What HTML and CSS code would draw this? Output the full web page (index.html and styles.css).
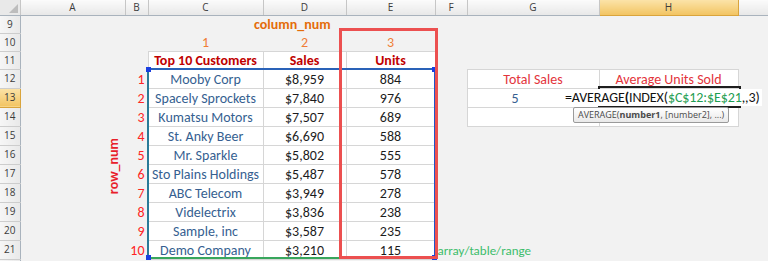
FILE: index.html
```html
<!DOCTYPE html>
<html lang="en">
<head>
    <meta charset="UTF-8">
    <meta name="viewport" content="width=device-width, initial-scale=1.0">
    <title>INDEX inside AVERAGE</title>
    <link rel="stylesheet" href="styles.css">
</head>
<body>

<div class="sheet">
    <table class="grid">
        <colgroup>
            <col class="w-rh"><col class="w-a"><col class="w-b"><col class="w-c"><col class="w-d">
            <col class="w-e"><col class="w-f"><col class="w-g"><col class="w-h"><col class="w-i">
        </colgroup>
        <tr class="hdr">
            <th class="corner"><span class="tri"></span></th>
            <th>A</th><th>B</th><th>C</th><th>D</th><th>E</th><th>F</th><th>G</th>
            <th class="active">H</th><th></th>
        </tr>
        <tr class="short">
            <th class="rh">9</th><td></td><td></td><td></td>
            <td class="note-col"><span>column_num</span></td>
            <td></td><td></td><td></td><td></td><td></td>
        </tr>
        <tr class="short">
            <th class="rh">10</th><td></td><td></td>
            <td class="idx-col">1</td><td class="idx-col">2</td><td class="idx-col">3</td>
            <td></td><td></td><td></td><td></td>
        </tr>
        <tr class="short">
            <th class="rh">11</th><td></td><td></td>
            <td class="cell head">Top 10 Customers</td><td class="cell head">Sales</td><td class="cell head">Units</td>
            <td></td><td></td><td></td><td></td>
        </tr>
        <tr>
            <th class="rh">12</th>
            <td class="note-row" rowspan="10"><span>row_num</span></td>
            <td class="idx-row">1</td>
            <td class="cell name">Mooby Corp</td><td class="cell num">$8,959</td><td class="cell num">884</td>
            <td></td>
            <td class="cell label">Total Sales</td><td class="cell label">Average Units Sold</td><td></td>
        </tr>
        <tr>
            <th class="rh active">13</th>
            <td class="idx-row">2</td>
            <td class="cell name">Spacely Sprockets</td><td class="cell num">$7,840</td><td class="cell num">976</td>
            <td></td>
            <td class="cell result">5</td><td class="cell"></td><td></td>
        </tr>
        <tr>
            <th class="rh">14</th>
            <td class="idx-row">3</td>
            <td class="cell name">Kumatsu Motors</td><td class="cell num">$7,507</td><td class="cell num">689</td>
            <td></td>
            <td class="cell"></td><td class="cell"></td><td></td>
        </tr>
        <tr>
            <th class="rh">15</th>
            <td class="idx-row">4</td>
            <td class="cell name">St. Anky Beer</td><td class="cell num">$6,690</td><td class="cell num">588</td>
            <td></td><td></td><td></td><td></td>
        </tr>
        <tr>
            <th class="rh">16</th>
            <td class="idx-row">5</td>
            <td class="cell name">Mr. Sparkle</td><td class="cell num">$5,802</td><td class="cell num">555</td>
            <td></td><td></td><td></td><td></td>
        </tr>
        <tr>
            <th class="rh">17</th>
            <td class="idx-row">6</td>
            <td class="cell name">Sto Plains Holdings</td><td class="cell num">$5,487</td><td class="cell num">578</td>
            <td></td><td></td><td></td><td></td>
        </tr>
        <tr>
            <th class="rh">18</th>
            <td class="idx-row">7</td>
            <td class="cell name">ABC Telecom</td><td class="cell num">$3,949</td><td class="cell num">278</td>
            <td></td><td></td><td></td><td></td>
        </tr>
        <tr>
            <th class="rh">19</th>
            <td class="idx-row">8</td>
            <td class="cell name">Videlectrix</td><td class="cell num">$3,836</td><td class="cell num">238</td>
            <td></td><td></td><td></td><td></td>
        </tr>
        <tr>
            <th class="rh">20</th>
            <td class="idx-row">9</td>
            <td class="cell name">Sample, inc</td><td class="cell num">$3,587</td><td class="cell num">235</td>
            <td></td><td></td><td></td><td></td>
        </tr>
        <tr>
            <th class="rh">21</th>
            <td class="idx-row">10</td>
            <td class="cell name">Demo Company</td><td class="cell num">$3,210</td><td class="cell num">115</td>
            <td class="note-range">array/table/range</td>
            <td></td><td></td><td></td>
        </tr>
        <tr class="tail">
            <th class="rh"></th><td></td><td></td><td></td><td></td><td></td><td></td><td></td><td></td><td></td>
        </tr>
    </table>

    <!-- overlays: referenced range, highlighted column, cell being edited -->
    <div class="range">
        <span class="knob tl"></span><span class="knob tr"></span>
        <span class="knob br"></span><span class="knob bl"></span>
    </div>
    <div class="col-box"></div>
    <div class="active-cell"></div>
    <div class="editor">=AVERAGE<b>(</b>INDEX(<span class="ref">$C$12:$E$21</span>,,3)</div>
    <div class="tip">AVERAGE(<b>number1</b>, [number2], ...)</div>
</div>

</body>
</html>
```

FILE: styles.css
```css
body {
    margin: 0;
    background-color: #f2f2f2;
    font-family: Carlito, Lato, "Liberation Sans", sans-serif;
}
.sheet {
    position: relative;
    width: 768px;
    height: 261px;
    overflow: hidden;
}
.grid {
    border-collapse: collapse;
    table-layout: fixed;
    width: 768px;
}
.w-rh { width: 20px; }
.w-a { width: 105px; }
.w-b { width: 23px; }
.w-c { width: 115px; }
.w-d { width: 83px; }
.w-e { width: 89px; }
.w-f { width: 32px; }
.w-g { width: 132px; }
.w-h { width: 139px; }
.w-i { width: 30px; }

.grid tr { height: 19px; }
.grid tr.hdr { height: 15px; }
.grid tr.short { height: 18px; }
.grid tr.tail { height: 2px; }

.grid th {
    padding: 0;
    font-family: "Open Sans", "Liberation Sans", sans-serif;
    font-size: 10px;
    font-weight: normal;
    line-height: 13px;
    color: #3b3b3b;
    background: linear-gradient(#fbfbfb, #e8e8e8);
    border-right: 1px solid #c6c6c6;
    border-bottom: 1px solid #a9b3bd;
    text-align: center;
    overflow: hidden;
}
.grid th.rh {
    background: linear-gradient(90deg, #f6f6f6, #e9e9e9);
    border-bottom: 1px solid #cdcdcd;
    border-right: 1px solid #a9b3bd;
    vertical-align: middle;
}
.grid th.active {
    background: linear-gradient(#fbe3a8, #f2c462);
    border-color: #d9a43c;
}
.grid th.corner {
    position: relative;
    background: #e9e9e9;
}
.tri {
    position: absolute;
    right: 2px;
    bottom: 2px;
    border-left: 9px solid transparent;
    border-bottom: 9px solid #bdbdbd;
}

.grid td {
    padding: 0 3px;
    font-size: 14px;
    line-height: 16px;
    vertical-align: bottom;
    white-space: nowrap;
    overflow: visible;
}
.cell {
    background-color: #ffffff;
    border: 1px solid #d6d6d6;
    text-align: center;
}
.head {
    font-weight: bold;
    color: #c00000;
}
.name {
    color: #365f91;
}
.num {
    color: #1c1c1c;
}
.label {
    color: #e3343c;
}
.result {
    color: #365f91;
    text-align: left;
    padding-left: 44px !important;
}
.idx-col {
    text-align: center;
    color: #f07d36;
}
.idx-row {
    text-align: right;
    color: #ff2424;
    padding-right: 3px !important;
}
.note-col span {
    display: inline-block;
    margin-left: -12px;
    font-weight: bold;
    color: #e46c0a;
}
.grid td.note-row {
    vertical-align: middle;
    text-align: right;
    padding-right: 3px;
}
.note-row span {
    display: inline-block;
    writing-mode: vertical-rl;
    transform: rotate(180deg);
    font-weight: bold;
    color: #e8202a;
    margin-top: 8px;
}
.note-range {
    color: #3dbd6b;
    font-size: 13px !important;
    padding-left: 2px !important;
}

.range {
    position: absolute;
    left: 147px;
    top: 68px;
    width: 289px;
    height: 191px;
    box-sizing: border-box;
    border-top: 2px solid #2a62b8;
    border-left: 2px solid #2a7a98;
    border-right: 2px solid #1f54c8;
    border-bottom: 2px solid #38a65c;
}
.knob {
    position: absolute;
    width: 5px;
    height: 5px;
    background-color: #1a3fe0;
}
.knob.tl { left: -3px; top: -3px; }
.knob.tr { right: -3px; top: -3px; }
.knob.br { right: -3px; bottom: -3px; }
.knob.bl { left: -3px; bottom: -3px; }
.col-box {
    position: absolute;
    left: 339px;
    top: 28px;
    width: 99px;
    height: 231px;
    box-sizing: border-box;
    border: 3px solid #ec5050;
}
.active-cell {
    position: absolute;
    left: 598px;
    top: 86px;
    width: 143px;
    height: 22px;
    box-sizing: border-box;
    border: 2px solid #1e1e1e;
}
.editor {
    position: absolute;
    left: 565px;
    top: 89px;
    padding-right: 2px;
    font-size: 14px;
    line-height: 17px;
    letter-spacing: -0.1px;
    white-space: nowrap;
    color: #111111;
    background-color: #ffffff;
}
.editor .ref {
    color: #1f9e52;
}
.tip {
    position: absolute;
    left: 573px;
    top: 107px;
    height: 14px;
    padding: 0 4px;
    font-family: "Open Sans", "Liberation Sans", sans-serif;
    font-size: 9px;
    line-height: 14px;
    color: #4a4a4a;
    background: linear-gradient(#ffffff, #e9e9e9);
    border: 1px solid #9a9a9a;
    border-radius: 2px;
    white-space: nowrap;
}
```
